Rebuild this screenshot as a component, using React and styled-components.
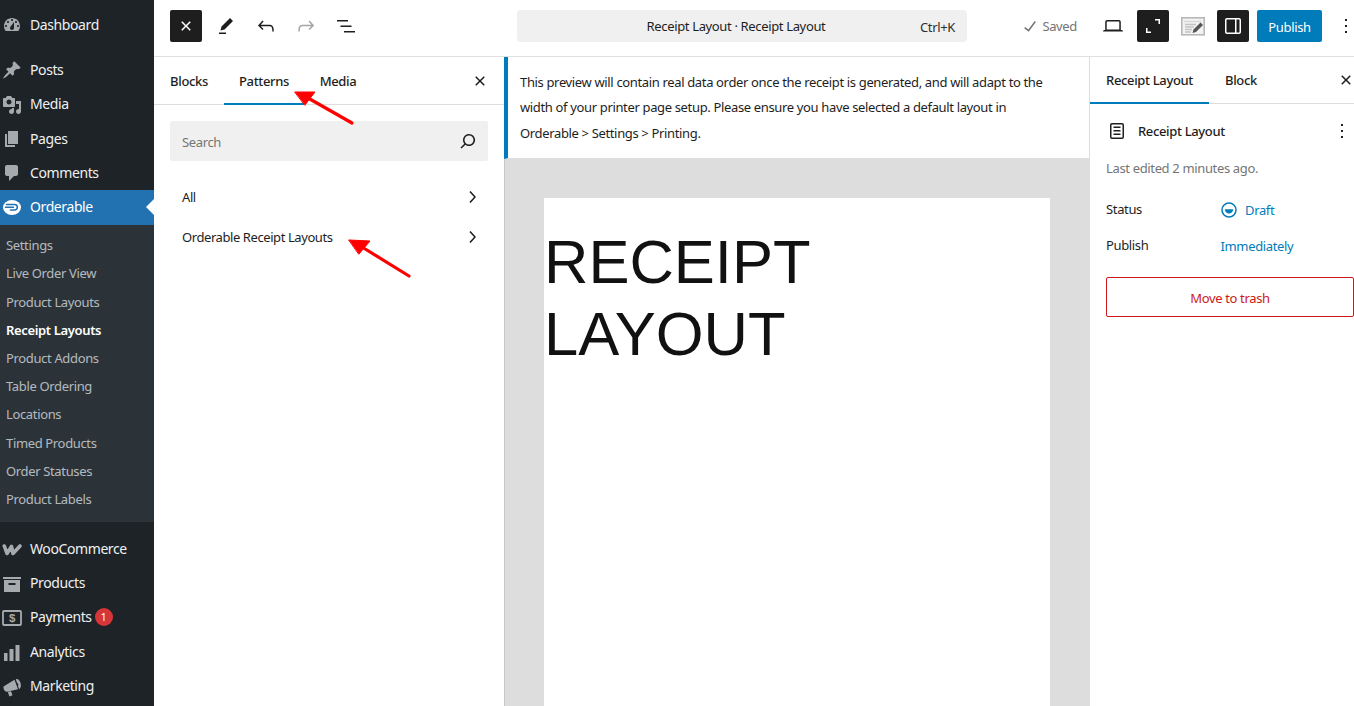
import React from "react";
import styled, { createGlobalStyle } from "styled-components";

const Global = createGlobalStyle`
  html, body { margin: 0; padding: 0; height: 706px; overflow: hidden; background: #fff; }
  body { font-family: "Noto Sans", "Open Sans", sans-serif; font-size: 13px; color: #1e1e1e; letter-spacing: -0.35px; }
  * { box-sizing: border-box; }
`;

const Page = styled.div`position: relative; display: flex; width: 1354px; height: 706px; overflow: hidden;`;

/* Admin menu */
const Sidebar = styled.nav`width: 154px; height: 706px; flex: none; background: #1d2327; padding-top: 8px; overflow: hidden;`;
const MenuGroup = styled.div`margin-bottom: ${p => p.$gap || 0}px;`;
const MenuItem = styled.div`
  position: relative; display: flex; align-items: center; height: 34.3px; padding: 0 0 ${p => p.$lift ?? 2}px 30px;
  color: ${p => (p.$active ? "#fff" : "#f0f0f1")}; background: ${p => (p.$active ? "#2271b1" : "transparent")};
  font-size: 14px; letter-spacing: -0.4px;
  svg.mi { position: absolute; left: 2px; top: 7px; width: 20px; height: 20px; fill: ${p => (p.$active ? "#fff" : "#a7aaad")}; }
`;
const ActiveNotch = styled.span`
  position: absolute; right: 0; top: 9px; width: 0; height: 0;
  border: 8px solid transparent; border-right-color: #fff; border-left-width: 0;
`;
const Badge = styled.span`
  display: inline-flex; align-items: center; justify-content: center; width: 18px; height: 18px; margin-left: 3px;
  border-radius: 50%; background: #d63638; color: #fff; font-size: 11px; letter-spacing: 0;
`;
const Submenu = styled.div`background: #2c3338; padding: 7.4px 0 7.6px; margin-bottom: 11px;`;
const SubItem = styled.div`
  display: flex; align-items: center; height: 28.2px; padding: 0 0 2px 6px;
  color: ${p => (p.$current ? "#fff" : "rgba(240,246,252,.7)")}; font-weight: ${p => (p.$current ? 600 : 400)};
`;

/* Editor */
const Editor = styled.div`flex: 1; min-width: 0; display: flex; flex-direction: column;`;
const TopBar = styled.header`
  height: 57px; flex: none; display: grid; grid-template-columns: 363px 450px 1fr; align-items: start; padding-top: 10px;
  border-bottom: 1px solid #e0e0e0;
`;
const ToolGroup = styled.div`display: flex; align-items: center; padding-left: 16px; gap: 8px;`;
const IconBtn = styled.span`
  width: 32px; height: 32px; flex: none; display: flex; align-items: center; justify-content: center; border-radius: 2px;
  margin: 0 ${p => p.$mr || 0}px 0 ${p => p.$ml || 0}px;
  background: ${p => (p.$dark ? "#1e1e1e" : "transparent")};
  svg { width: 24px; height: 24px; fill: ${p => (p.$dark ? "#fff" : p.$muted ? "#a5a5a5" : "#1e1e1e")}; }
`;
const TitlePill = styled.div`
  position: relative; height: 32px; background: #f0f0f0; border-radius: 4px; display: flex; align-items: center; justify-content: center;
  color: #1e1e1e; padding-right: 12px;
`;
const Shortcut = styled.span`position: absolute; right: 12px; top: 8px; line-height: 18px; color: #2f2f2f;`;
const ActionGroup = styled.div`display: flex; align-items: center; justify-content: flex-end; height: 32px;`;
const SavedState = styled.span`display: flex; align-items: center; color: #757575; margin-right: 20px;
  svg { width: 24px; height: 24px; fill: #757575; }
`;
const PublishBtn = styled.span`
  width: 65px; height: 32px; margin-left: 8px; padding-top: 1px; display: flex; align-items: center; justify-content: center; background: #007cba; color: #fff; border-radius: 2px;
`;
const KebabWrap = styled.span`width: 16px; flex: none; margin-left: 16px; display: flex; justify-content: center;
  svg { width: 24px; height: 24px; fill: #1e1e1e; flex: none; }
`;

const Body = styled.div`flex: 1; min-height: 0; display: flex;`;

const Inserter = styled.aside`width: 350px; flex: none;`;
const InserterTabs = styled.div`position: relative; height: 48px; display: flex; align-items: center; border-bottom: 1px solid #ddd;`;
const Tab = styled.span`
  position: relative; height: 100%; display: flex; align-items: center; justify-content: center; width: ${p => p.$w}px; color: #1e1e1e; font-weight: 500;
  ${p => p.$active && `&::after { content: ""; position: absolute; left: 0; right: 0; bottom: -1px; height: 2px; background: #007cba; }`}
`;
const PanelClose = styled.span`
  position: absolute; right: ${p => p.$right}px; top: ${p => p.$top}px; width: 24px; height: 24px;
  svg { width: 24px; height: 24px; fill: #1e1e1e; }
`;
const SearchBox = styled.div`
  margin: 16px 16px 0; height: 40px; background: #f0f0f0; border-radius: 2px; display: flex; align-items: center; justify-content: space-between;
  padding: 2px 8px 0 12px; color: #757575;
  svg { width: 24px; height: 24px; fill: #1e1e1e; margin-top: -2px; }
`;
const CategoryList = styled.div`margin-top: 16px; padding: 0 16px;`;
const Category = styled.div`
  height: 40px; display: flex; align-items: center; justify-content: space-between; padding: 0 4px 0 12px; color: #1e1e1e; letter-spacing: -0.42px;
  svg { width: 24px; height: 24px; fill: #1e1e1e; }
`;

const Canvas = styled.main`flex: 1; min-width: 0; display: flex; flex-direction: column; background: #ddd; overflow: hidden; box-shadow: inset 1px 0 0 #c8c8c8;`;
const Notice = styled.div`
  flex: none; height: 102px; background: #fff; border-left: 4px solid #007cba; padding: 12.5px 30px 0 12px; line-height: 25.6px; border-bottom: 1px solid #ddd; color: #1e1e1e;
`;
const PaperSheet = styled.div`margin: 39px 0 0 40px; width: 506px; flex: 1; background: #fff; padding-top: 28px;`;
const Heading = styled.h1`
  margin: 0; font-family: "Liberation Sans", Arial, sans-serif; font-weight: 400; font-size: 61.5px; line-height: 72px; letter-spacing: 0; color: #111; width: 330px;
`;

const Settings = styled.aside`position: relative; width: 265px; flex: none; border-left: 1px solid #ddd;`;
const SettingsTabs = styled.div`height: 47px; display: flex; border-bottom: 1px solid #ddd;`;
const PostHead = styled.div`
  display: flex; align-items: center; height: 24px; margin: 15px 0 0 15px; font-weight: 500;
  svg { width: 24px; height: 24px; fill: #1e1e1e; margin-right: 9px; flex: none; }
`;
const Edited = styled.div`margin: 16px 0 0 16px; color: #757575; line-height: 18px;`;
const MetaRow = styled.div`display: grid; grid-template-columns: 114.5px 1fr; align-items: center; height: 36px; padding-left: 16px;`;
const MetaLink = styled.span`display: flex; align-items: center; gap: 8.5px; padding-top: ${p => p.$drop || 0}px; color: #007cba;`;
const MetaList = styled.div`margin-top: 14px;`;
const Trash = styled.div`
  margin: 14px 0 0 16px; height: 40px; padding-top: 1px; display: flex; align-items: center; justify-content: center;
  border: 1px solid #cc1818; border-radius: 2px; color: #cc1818;
`;

const Overlay = styled.svg`position: absolute; left: 0; top: 0; width: 1354px; height: 706px; pointer-events: none;`;

const P = {
  close: "M12 13.06l3.712 3.713 1.061-1.06L13.061 12l3.712-3.712-1.06-1.06L12 10.938 8.288 7.227l-1.061 1.06L10.939 12l-3.712 3.712 1.06 1.061L12 13.061z",
  edit: "m19 7-3-3-8.5 8.5-1 4 4-1L19 7Zm-7 11.5H5V20h7v-1.5Z",
  undo: "M18.3 11.7c-.6-.6-1.4-.9-2.3-.9H6.7l2.9-3.3-1.1-1-4.5 5L8.5 16l1-1-2.7-2.7H16c.5 0 .9.2 1.3.5 1 1 1 3.4 1 4.5v.3h1.5v-.2c0-1.5 0-4.3-1.5-5.7z",
  redo: "M15.6 6.5l-1.1 1 2.9 3.3H8c-.9 0-1.7.3-2.3.9-1.4 1.5-1.4 4.2-1.4 5.6v.2h1.5v-.3c0-1.1 0-3.5 1-4.5.3-.3.7-.5 1.3-.5h9.2L14.5 15l1.1 1.1 4.6-4.6-4.6-5z",
  list: "M3 6h11v1.5H3V6Zm3.5 5.5h11V13h-11v-1.5ZM21 17H10v1.5h11V17Z",
  search: "M13 5c-3.3 0-6 2.7-6 6 0 1.4.5 2.7 1.3 3.7l-3.8 3.8 1.1 1.1 3.8-3.8c1 .8 2.3 1.3 3.7 1.3 3.3 0 6-2.7 6-6S16.3 5 13 5zm0 10.5c-2.5 0-4.5-2-4.5-4.5s2-4.5 4.5-4.5 4.5 2 4.5 4.5-2 4.5-4.5 4.5z",
  chevron: "M10.6 6L9.4 7l4.6 5-4.6 5 1.2 1 5.4-6z",
  kebab: "M13 19h-2v-2h2v2zm0-6h-2v-2h2v2zm0-6h-2V5h2v2z",
  laptop: "M20.5 16h-.7V8c0-1.1-.9-2-2-2H6.2c-1.1 0-2 .9-2 2v8h-.7c-.8 0-1.5.7-1.5 1.5h20c0-.8-.7-1.5-1.5-1.5zM5.7 8c0-.3.2-.5.5-.5h11.6c.3 0 .5.2.5.5v7.6H5.7V8z",
  full: "M5 14h1.5v3.5H10V19H5v-5Zm9-9h5v5h-1.5V6.5H14V5Z",
  sidebar: "M18 4H6c-1.1 0-2 .9-2 2v12c0 1.1.9 2 2 2h12c1.1 0 2-.9 2-2V6c0-1.1-.9-2-2-2zm-4 14.5H6c-.3 0-.5-.2-.5-.5V6c0-.3.2-.5.5-.5h8v13zm4.5-.5c0 .3-.2.5-.5.5h-2.5v-13H18c.3 0 .5.2.5.5v12z",
  post: "M15.5 7.5h-7V9h7V7.5Zm-7 3.5h7v1.5h-7V11Zm7 3.5h-7V16h7v-1.5ZM17 4H7a2 2 0 0 0-2 2v12a2 2 0 0 0 2 2h10a2 2 0 0 0 2-2V6a2 2 0 0 0-2-2Zm.5 14a.5.5 0 0 1-.5.5H7a.5.5 0 0 1-.5-.5V6a.5.5 0 0 1 .5-.5h10a.5.5 0 0 1 .5.5v12Z",
  check: "M16.7 7.1l-6.3 8.5-3.3-2.5-.9 1.2 4.5 3.4L17.9 7.9z",
};
const Wp = ({ d }) => <svg viewBox="0 0 24 24"><path d={d} /></svg>;

const Dash = {
  dashboard: "M3.76 16h12.48c1.1-1.37 1.76-3.11 1.76-5 0-4.42-3.58-8-8-8s-8 3.58-8 8c0 1.89.66 3.63 1.76 5zM10 4c.55 0 1 .45 1 1s-.45 1-1 1-1-.45-1-1 .45-1 1-1zM6 6c.55 0 1 .45 1 1s-.45 1-1 1-1-.45-1-1 .45-1 1-1zm8 0c.55 0 1 .45 1 1s-.45 1-1 1-1-.45-1-1 .45-1 1-1zm-5.37 5.55L12 7v6c0 1.1-.9 2-2 2s-2-.9-2-2c0-.57.24-1.08.63-1.45zM4 10c.55 0 1 .45 1 1s-.45 1-1 1-1-.45-1-1 .45-1 1-1zm12 0c.55 0 1 .45 1 1s-.45 1-1 1-1-.45-1-1 .45-1 1-1z",
  post: "M10.44 3.02l1.82-1.82 6.36 6.35-1.83 1.82c-1.05-.68-2.48-.57-3.41.36l-.75.75c-.92.93-1.04 2.35-.35 3.41l-1.83 1.82-2.41-2.41-2.8 2.79c-.42.42-3.38 2.71-3.8 2.29s1.86-3.39 2.28-3.81l2.79-2.79L4.1 9.36l1.83-1.82c1.05.69 2.48.57 3.4-.36l.75-.75c.93-.92 1.05-2.35.36-3.41z",
  media: "M13 11V4c0-.55-.45-1-1-1h-1.67L9 1H5L3.67 3H2c-.55 0-1 .45-1 1v7c0 .55.45 1 1 1h10c.55 0 1-.45 1-1zM7 4.5c1.38 0 2.5 1.12 2.5 2.5S8.38 9.5 7 9.5 4.5 8.38 4.5 7 5.62 4.5 7 4.5zM14 6h5v10.5c0 1.38-1.12 2.5-2.5 2.5S14 17.88 14 16.5s1.12-2.5 2.5-2.5c.17 0 .34.02.5.05V9h-3V6zm-4 8.05V13h2v3.5c0 1.38-1.12 2.5-2.5 2.5S7 17.88 7 16.5 8.12 14 9.5 14c.17 0 .34.02.5.05z",
  pages: "M6 15V2h10v13H6zm-1 1h8v2H3V5h2v11z",
  comments: "M5 2h9c1.1 0 2 .9 2 2v7c0 1.1-.9 2-2 2h-2l-5 5v-5H5c-1.1 0-2-.9-2-2V4c0-1.1.9-2 2-2z",
  products: "M1 3h18v2H1zM2 6h16v12H2V6zm4.5 3v2h7V9h-7z",
  analytics: "M2 10h3.5v8H2zM7.5 6h4v12h-4zM13.5 2h4v16h-4z",
  marketing: "M1.5 9.5 L12.5 2.8 L16 12.2 L5 14.8 C3 15 1 12 1.5 9.5Z M5.8 15 L9 14.3 L10.5 18.2 L7.4 19.4 Z M13.8 2.4 C15.6 1.2 17.8 3.2 18.6 6.2 C19.4 9.2 18.6 11.6 17 12 L15.8 8.6 C16.8 8.2 16.8 6.8 15.2 6 Z",
};
const Mi = ({ d, children }) => <svg className="mi" viewBox="0 0 20 20">{d && <path d={d} />}{children}</svg>;

const subs = ["Settings", "Live Order View", "Product Layouts", "Receipt Layouts", "Product Addons", "Table Ordering", "Locations", "Timed Products", "Order Statuses", "Product Labels"];

export default function App() {
  return (
    <Page>
      <Global />
      <Sidebar>
        <MenuGroup $gap={11}>
          <MenuItem><Mi d={Dash.dashboard} />Dashboard</MenuItem>
        </MenuGroup>
        <MenuItem><Mi d={Dash.post} />Posts</MenuItem>
        <MenuItem><Mi d={Dash.media} />Media</MenuItem>
        <MenuItem><Mi d={Dash.pages} />Pages</MenuItem>
        <MenuItem><Mi d={Dash.comments} />Comments</MenuItem>
        <MenuItem $active>
          <Mi>
            <ellipse cx="10" cy="10.5" rx="9" ry="7.5" fill="#fff" />
            <path d="M4.5 7.6h8c1.7 0 2.8 1.2 2.8 2.7s-1.1 2.7-2.8 2.7H8.5" fill="none" stroke="#2271b1" strokeWidth="1.5" strokeLinecap="round" />
            <path d="M3.5 10.3h8" fill="none" stroke="#2271b1" strokeWidth="1.5" strokeLinecap="round" />
          </Mi>
          Orderable<ActiveNotch />
        </MenuItem>
        <Submenu>
          {subs.map(s => <SubItem key={s} $current={s === "Receipt Layouts"}>{s}</SubItem>)}
        </Submenu>
        <MenuItem>
          <Mi><path d="M2.3 6 L5 13.5 L9.5 6.5 L11 13.5 L18 6" fill="none" stroke="#a7aaad" strokeWidth="3.6" strokeLinejoin="round" strokeLinecap="round" /></Mi>
          WooCommerce
        </MenuItem>
        <MenuItem $lift={3}><Mi d={Dash.products} />Products</MenuItem>
        <MenuItem $lift={3}>
          <Mi>
            <rect x="1" y="3" width="18" height="14" rx="1" fill="none" stroke="#a7aaad" strokeWidth="1.8" />
            <text x="10" y="14.2" textAnchor="middle" fontSize="11.5" fontWeight="700" fill="#a7aaad" fontFamily="Liberation Sans">$</text>
          </Mi>
          Payments<Badge>1</Badge>
        </MenuItem>
        <MenuItem><Mi d={Dash.analytics} />Analytics</MenuItem>
        <MenuItem><Mi d={Dash.marketing} />Marketing</MenuItem>
      </Sidebar>

      <Editor>
        <TopBar>
          <ToolGroup>
            <IconBtn $dark><Wp d={P.close} /></IconBtn>
            <IconBtn><Wp d={P.edit} /></IconBtn>
            <IconBtn><Wp d={P.undo} /></IconBtn>
            <IconBtn $muted><Wp d={P.redo} /></IconBtn>
            <IconBtn><Wp d={P.list} /></IconBtn>
          </ToolGroup>
          <TitlePill>Receipt Layout · Receipt Layout<Shortcut>Ctrl+K</Shortcut></TitlePill>
          <ActionGroup>
            <SavedState><Wp d={P.check} />Saved</SavedState>
            <IconBtn><Wp d={P.laptop} /></IconBtn>
            <IconBtn $dark $ml={8}><Wp d={P.full} /></IconBtn>
            <IconBtn $ml={8} $mr={8}>
              <svg viewBox="0 0 24 24">
                <rect x="0.8" y="3.8" width="22.4" height="17" fill="#f3f3f3" stroke="#b8b8b8" strokeWidth="1.6" />
                <path d="M3 7.5h17" stroke="#d8d8d8" strokeWidth="1.5" fill="none" />
                <path d="M4 10.5h11M4 13h9M4 15.5h7M4 18h6" stroke="#c4c4c4" strokeWidth="1.3" fill="none" />
                <path d="M11.5 19l1-3.5 7-7 2.5 2.5-7 7z" fill="#555" />
              </svg>
            </IconBtn>
            <IconBtn $dark><Wp d={P.sidebar} /></IconBtn>
            <PublishBtn>Publish</PublishBtn>
            <KebabWrap><Wp d={P.kebab} /></KebabWrap>
          </ActionGroup>
        </TopBar>

        <Body>
          <Inserter>
            <InserterTabs>
              <Tab $w={70}>Blocks</Tab>
              <Tab $w={80} $active>Patterns</Tab>
              <Tab $w={68}>Media</Tab>
              <PanelClose $right={12} $top={12}><Wp d={P.close} /></PanelClose>
            </InserterTabs>
            <SearchBox>Search<Wp d={P.search} /></SearchBox>
            <CategoryList>
              <Category>All<Wp d={P.chevron} /></Category>
              <Category>Orderable Receipt Layouts<Wp d={P.chevron} /></Category>
            </CategoryList>
          </Inserter>

          <Canvas>
            <Notice>This preview will contain real data order once the receipt is generated, and will adapt to the width of your printer page setup. Please ensure you have selected a default layout in Orderable &gt; Settings &gt; Printing.</Notice>
            <PaperSheet><Heading>RECEIPT LAYOUT</Heading></PaperSheet>
          </Canvas>

          <Settings>
            <SettingsTabs>
              <Tab $w={119} $active>Receipt Layout</Tab>
              <Tab $w={64}>Block</Tab>
            </SettingsTabs>
            <PanelClose $right={-4} $top={11}><Wp d={P.close} /></PanelClose>
            <PostHead><Wp d={P.post} />Receipt Layout</PostHead>
            <PanelClose $right={0} $top={62}><Wp d={P.kebab} /></PanelClose>
            <Edited>Last edited 2 minutes ago.</Edited>
            <MetaList>
              <MetaRow>
                Status
                <MetaLink $drop={1}>
                  <svg width="16" height="16" viewBox="0 0 16 16">
                    <circle cx="8" cy="8" r="7" fill="none" stroke="#007cba" strokeWidth="1.5" />
                    <path d="M3.8 7.2h8.4a4.2 4.2 0 0 1-8.4 0z" fill="#007cba" />
                  </svg>
                  Draft
                </MetaLink>
              </MetaRow>
              <MetaRow>Publish<MetaLink $drop={1}>Immediately</MetaLink></MetaRow>
            </MetaList>
            <Trash>Move to trash</Trash>
          </Settings>
        </Body>
      </Editor>

      <Overlay viewBox="0 0 1354 706">
        <g fill="#f00" stroke="#f00" strokeWidth="3.2" strokeLinecap="round">
          <path d="M352 123 L308 98" />
          <path d="M295 92 L315 92 L305 105 Z" strokeWidth="1" strokeLinejoin="round" />
          <path d="M409 276 L362 247" />
          <path d="M349 240 L370 241 L359 254 Z" strokeWidth="1" strokeLinejoin="round" />
        </g>
      </Overlay>
    </Page>
  );
}
